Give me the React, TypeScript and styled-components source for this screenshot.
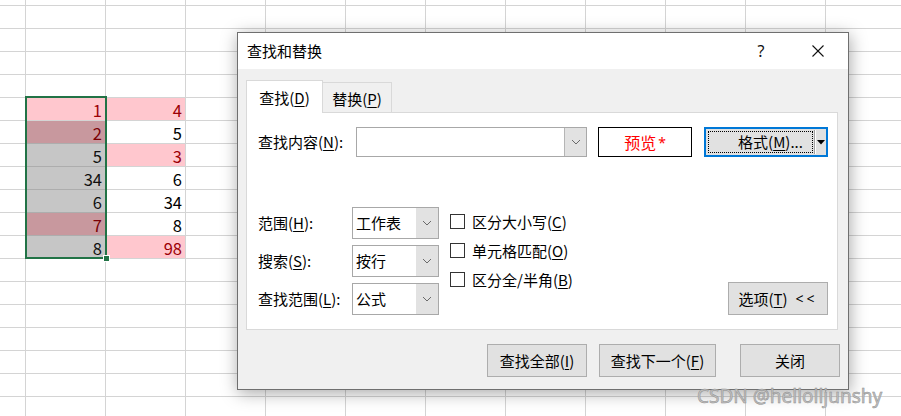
import React from 'react';
import styled, { createGlobalStyle, css } from 'styled-components';

const GlobalStyle = createGlobalStyle`
  html, body { margin: 0; padding: 0; background: #fff; }
  body { width: 901px; height: 416px; overflow: hidden; font-family: "Noto Sans CJK SC", "Noto Sans", sans-serif; }
  * { box-sizing: border-box; }
`;

const Page = styled.div`
  position: relative;
  width: 901px;
  height: 416px;
  overflow: hidden;
  background: #fff;
`;

/* ---------- spreadsheet ---------- */
const Sheet = styled.div`
  display: grid;
  grid-template-columns: 26px repeat(11, 80px);
  grid-template-rows: 6px repeat(18, 23px);
`;

type Tone = 'plain' | 'bad' | 'sel' | 'selBad';

const toneStyles: Record<Tone, ReturnType<typeof css>> = {
  plain: css`background: transparent; color: #000;`,
  bad: css`background: #ffc7ce; color: #9c0006;`,
  sel: css`background: #c6c6c6; color: #111; border-bottom-color: #adadad;`,
  selBad: css`background: #c8989e; color: #7a0005; border-bottom-color: #adadad;`,
};

const Cell = styled.div<{ $tone: Tone }>`
  border-right: 1px solid #d4d4d4;
  border-bottom: 1px solid #d4d4d4;
  display: flex;
  align-items: flex-end;
  justify-content: flex-end;
  padding: 0 3px 0 0;
  font-family: "Noto Sans CJK SC", "Noto Sans", sans-serif;
  font-size: 16.5px;
  line-height: 20px;
  ${p => toneStyles[p.$tone]}
`;

const SelectionFrame = styled.div`
  position: absolute;
  left: 25px;
  top: 96px;
  width: 82px;
  height: 163px;
  border: 2px solid #217346;
  pointer-events: none;
`;

const FillHandle = styled.div`
  position: absolute;
  right: -5px;
  bottom: -5px;
  width: 7px;
  height: 7px;
  background: #217346;
  border: 1px solid #fff;
`;

/* ---------- dialog ---------- */
const Dialog = styled.div`
  position: absolute;
  left: 237px;
  top: 32px;
  width: 612px;
  height: 358px;
  border: 1px solid #6f6f6f;
  background: #f0f0f0;
  box-shadow: 1px 3px 16px rgba(0, 0, 0, 0.35);
  display: flex;
  flex-direction: column;
  font-family: "Noto Sans CJK SC", "Noto Sans", sans-serif;
  font-size: 15px;
  color: #000;
`;

const TitleBar = styled.div`
  height: 36px;
  flex: none;
  background: #fff;
  display: flex;
  align-items: center;
  padding-left: 9px;
`;

const Title = styled.div`
  flex: 1;
  line-height: 20px;
`;

const TitleButton = styled.div<{ $w: number }>`
  width: ${p => p.$w}px;
  height: 100%;
  display: flex;
  align-items: center;
  justify-content: center;
  font-family: "Noto Sans", sans-serif;
  font-size: 16px;
  color: #111;
`;

const Body = styled.div`
  flex: 1;
  display: flex;
  flex-direction: column;
  padding: 11px 10px 0 8px;
`;

const TabRow = styled.div`
  height: 32px;
  display: flex;
  align-items: flex-end;
`;

const Tab = styled.div<{ $active?: boolean }>`
  position: relative;
  display: flex;
  align-items: center;
  justify-content: center;
  line-height: 20px;
  border: 1px solid #d9d9d9;
  border-bottom: none;
  ${p =>
    p.$active
      ? css`
          width: 77px;
          height: 33px;
          margin-bottom: -1px;
          background: #fff;
          z-index: 1;
          padding-top: 2px;
        `
      : css`
          width: 69px;
          height: 30px;
          border-left: none;
          background: #f0f0f0;
          padding-top: 3px;
        `}
`;

const U = styled.span`
  text-decoration: underline;
  text-underline-offset: 2px;
  text-decoration-thickness: 1px;
`;

const Panel = styled.div`
  flex: none;
  height: 218px;
  background: #fff;
  border: 1px solid #d9d9d9;
  display: flex;
  flex-direction: column;
  padding: 14px 9px 0 11px;
`;

const TopRow = styled.div`
  display: flex;
  align-items: center;
  height: 30px;
`;

const Label = styled.div<{ $w: number }>`
  width: ${p => p.$w}px;
  flex: none;
  line-height: 20px;
  white-space: nowrap;
`;

const Combo = styled.div<{ $w: number; $h: number }>`
  width: ${p => p.$w}px;
  height: ${p => p.$h}px;
  flex: none;
  border: 1px solid #a8a8a8;
  background: #fff;
  display: flex;
  align-items: stretch;
`;

const ComboText = styled.div`
  flex: 1;
  display: flex;
  align-items: center;
  padding-left: 3px;
  line-height: 20px;
  white-space: nowrap;
`;

const ComboArrow = styled.div<{ $boxed?: boolean }>`
  width: 22px;
  flex: none;
  background: #e2e2e2;
  display: flex;
  align-items: center;
  justify-content: center;
  ${p => p.$boxed && css`border-left: 1px solid #b5b5b5;`}
`;

const Preview = styled.div`
  width: 94px;
  height: 30px;
  flex: none;
  margin-left: 11px;
  border: 1px solid #000;
  background: #fff;
  color: #ff0000;
  display: flex;
  align-items: center;
  justify-content: center;
  line-height: 20px;
  font-size: 16px;
`;

const Star = styled.span`
  font-family: "Noto Sans", sans-serif;
  font-size: 14px;
  position: relative;
  top: 1px;
  margin-left: 2px;
`;

const FormatButton = styled.div`
  width: 124px;
  height: 30px;
  flex: none;
  margin-left: 12px;
  border: 2px solid #0078d7;
  background: #e1e1e1;
  display: flex;
  align-items: stretch;
`;

const FormatMain = styled.div`
  flex: 1;
  padding: 2px 1px 2px 2px;
  display: flex;
`;

const FocusRing = styled.div`
  flex: 1;
  border: 1px dotted #000;
  display: flex;
  align-items: center;
  justify-content: center;
  padding-left: 20px;
  line-height: 20px;
  white-space: nowrap;
`;

const FormatDivider = styled.div`
  width: 1px;
  margin: 1px 0;
  background: #a0a0a0;
  box-shadow: 1px 0 0 #fff;
`;

const FormatArrow = styled.div`
  width: 11px;
  display: flex;
  align-items: center;
  justify-content: center;
`;

const LowerRow = styled.div`
  display: flex;
  align-items: flex-end;
  margin-top: 50px;
`;

const FieldGrid = styled.div`
  display: grid;
  grid-template-columns: 94px 87px;
  grid-auto-rows: 32px;
  row-gap: 6px;
  align-items: center;
`;

const CheckList = styled.div`
  align-self: flex-start;
  margin-left: 11px;
  display: flex;
  flex-direction: column;
`;

const CheckRow = styled.div`
  height: 29px;
  display: flex;
  align-items: center;
  gap: 7px;
  line-height: 20px;
  white-space: nowrap;
`;

const Box = styled.div`
  width: 15px;
  height: 15px;
  border: 1px solid #333;
  background: #fff;
  flex: none;
`;

const Button = styled.div<{ $w: number }>`
  width: ${p => p.$w}px;
  height: 33px;
  flex: none;
  background: #e1e1e1;
  border: 1px solid #adadad;
  display: flex;
  align-items: center;
  justify-content: center;
  line-height: 20px;
  white-space: nowrap;
`;

const OptionsButton = styled(Button)`
  margin-left: auto;
`;

const CloseButton = styled(Button)`
  margin-left: 12px;
`;

const Chevrons = styled.span`
  font-family: "Noto Sans", sans-serif;
  font-size: 14px;
  margin-left: 8px;
  letter-spacing: 3px;
`;

const ButtonRow = styled.div`
  display: flex;
  justify-content: flex-end;
  margin-top: 14px;
  margin-right: -2px;
  gap: 12px;
`;

const Watermark = styled.div`
  position: absolute;
  left: 697px;
  top: 383px;
  font-family: "Noto Sans", sans-serif;
  font-size: 19px;
  line-height: 26px;
  color: #c2c2c2;
  -webkit-text-stroke: 0.5px #8e8e8e;
  white-space: nowrap;
`;

/* ---------- icons ---------- */
const Chevron = () => (
  <svg width="10" height="6" viewBox="0 0 10 6">
    <polyline points="1,1 5,5 9,1" fill="none" stroke="#6a6a6a" strokeWidth="1" />
  </svg>
);

const CloseIcon = () => (
  <svg width="12" height="12" viewBox="0 0 12 12">
    <line x1="0.5" y1="0.5" x2="11.5" y2="11.5" stroke="#111" strokeWidth="1.1" />
    <line x1="11.5" y1="0.5" x2="0.5" y2="11.5" stroke="#111" strokeWidth="1.1" />
  </svg>
);

const TriangleDown = () => (
  <svg width="8" height="5" viewBox="0 0 8 5">
    <polygon points="0,0 8,0 4,4.5" fill="#000" />
  </svg>
);

/* ---------- data ---------- */
type CellData = { v: string; tone: Tone };
const DATA: [CellData, CellData][] = [
  [{ v: '1', tone: 'bad' }, { v: '4', tone: 'bad' }],
  [{ v: '2', tone: 'selBad' }, { v: '5', tone: 'plain' }],
  [{ v: '5', tone: 'sel' }, { v: '3', tone: 'bad' }],
  [{ v: '34', tone: 'sel' }, { v: '6', tone: 'plain' }],
  [{ v: '6', tone: 'sel' }, { v: '34', tone: 'plain' }],
  [{ v: '7', tone: 'selBad' }, { v: '8', tone: 'plain' }],
  [{ v: '8', tone: 'sel' }, { v: '98', tone: 'bad' }],
];

const ROWS = 19;
const COLS = 12;
const FIRST_DATA_ROW = 5;

function SheetGrid() {
  const cells: React.ReactNode[] = [];
  for (let r = 0; r < ROWS; r++) {
    for (let c = 0; c < COLS; c++) {
      const d = r - FIRST_DATA_ROW;
      let data: CellData | null = null;
      if (d >= 0 && d < DATA.length && (c === 1 || c === 2)) data = DATA[d][c - 1];
      cells.push(
        <Cell key={`${r}-${c}`} $tone={data ? data.tone : 'plain'}>
          {data ? data.v : null}
        </Cell>
      );
    }
  }
  return <Sheet>{cells}</Sheet>;
}

const FIELDS: { label: React.ReactNode; value: string }[] = [
  { label: <>范围(<U>H</U>):</>, value: '工作表' },
  { label: <>搜索(<U>S</U>):</>, value: '按行' },
  { label: <>查找范围(<U>L</U>):</>, value: '公式' },
];

const CHECKS: React.ReactNode[] = [
  <>区分大小写(<U>C</U>)</>,
  <>单元格匹配(<U>O</U>)</>,
  <>区分全/半角(<U>B</U>)</>,
];

export default function App() {
  return (
    <Page>
      <GlobalStyle />
      <SheetGrid />
      <SelectionFrame>
        <FillHandle />
      </SelectionFrame>

      <Dialog>
        <TitleBar>
          <Title>查找和替换</Title>
          <TitleButton $w={54}>?</TitleButton>
          <TitleButton $w={60}>
            <CloseIcon />
          </TitleButton>
        </TitleBar>
        <Body>
          <TabRow>
            <Tab $active>
              查找(<U>D</U>)
            </Tab>
            <Tab>
              替换(<U>P</U>)
            </Tab>
          </TabRow>
          <Panel>
            <TopRow>
              <Label $w={98}>
                查找内容(<U>N</U>):
              </Label>
              <Combo $w={231} $h={30}>
                <ComboText />
                <ComboArrow $boxed>
                  <Chevron />
                </ComboArrow>
              </Combo>
              <Preview>
                预览<Star>*</Star>
              </Preview>
              <FormatButton>
                <FormatMain>
                  <FocusRing>
                    格式(<U>M</U>)...
                  </FocusRing>
                </FormatMain>
                <FormatDivider />
                <FormatArrow>
                  <TriangleDown />
                </FormatArrow>
              </FormatButton>
            </TopRow>
            <LowerRow>
              <FieldGrid>
                {FIELDS.map((f, i) => (
                  <React.Fragment key={i}>
                    <Label $w={94}>{f.label}</Label>
                    <Combo $w={87} $h={32}>
                      <ComboText>{f.value}</ComboText>
                      <ComboArrow>
                        <Chevron />
                      </ComboArrow>
                    </Combo>
                  </React.Fragment>
                ))}
              </FieldGrid>
              <CheckList>
                {CHECKS.map((c, i) => (
                  <CheckRow key={i}>
                    <Box />
                    <span>{c}</span>
                  </CheckRow>
                ))}
              </CheckList>
              <OptionsButton $w={100}>
                选项(<U>T</U>)<Chevrons>&lt;&lt;</Chevrons>
              </OptionsButton>
            </LowerRow>
          </Panel>
          <ButtonRow>
            <Button $w={100}>
              查找全部(<U>I</U>)
            </Button>
            <Button $w={117}>
              查找下一个(<U>F</U>)
            </Button>
            <CloseButton $w={100}>关闭</CloseButton>
          </ButtonRow>
        </Body>
      </Dialog>

      <Watermark>CSDN @hellolljunshy</Watermark>
    </Page>
  );
}
